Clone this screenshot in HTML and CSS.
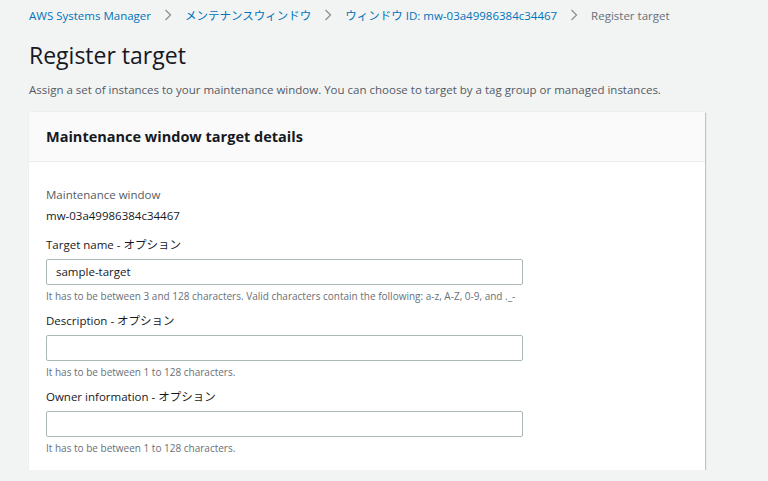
FILE: index.html
```html
<!DOCTYPE html>
<html lang="ja">
<head>
<meta charset="utf-8">
<title>Register target</title>
<link rel="stylesheet" href="styles.css">
</head>
<body>
<div class="page">
  <nav class="crumbs">
    <a class="crumb-link">AWS Systems Manager</a>
    <span class="sep"><svg width="8" height="12" viewBox="0 0 8 12"><path d="M1.5 1 L6.5 6 L1.5 11" fill="none" stroke="#879596" stroke-width="1.3"/></svg></span>
    <a class="crumb-link">メンテナンスウィンドウ</a>
    <span class="sep"><svg width="8" height="12" viewBox="0 0 8 12"><path d="M1.5 1 L6.5 6 L1.5 11" fill="none" stroke="#879596" stroke-width="1.3"/></svg></span>
    <a class="crumb-link">ウィンドウ ID: mw-03a49986384c34467</a>
    <span class="sep"><svg width="8" height="12" viewBox="0 0 8 12"><path d="M1.5 1 L6.5 6 L1.5 11" fill="none" stroke="#879596" stroke-width="1.3"/></svg></span>
    <span class="crumb-current">Register target</span>
  </nav>
  <h1 class="title">Register target</h1>
  <p class="desc">Assign a set of instances to your maintenance window. You can choose to target by a tag group or managed instances.</p>
  <section class="card">
    <header class="card-head">
      <h2 class="card-title">Maintenance window target details</h2>
    </header>
    <div class="card-body">
      <div class="kv">
        <div class="label">Maintenance window</div>
        <div class="value">mw-03a49986384c34467</div>
      </div>
      <div class="field">
        <div class="label">Target name - オプション</div>
        <div class="input">sample-target</div>
        <div class="hint">It has to be between 3 and 128 characters. Valid characters contain the following: a-z, A-Z, 0-9, and ._-</div>
      </div>
      <div class="field">
        <div class="label">Description - オプション</div>
        <div class="input"></div>
        <div class="hint">It has to be between 1 to 128 characters.</div>
      </div>
      <div class="field">
        <div class="label">Owner information - オプション</div>
        <div class="input"></div>
        <div class="hint">It has to be between 1 to 128 characters.</div>
      </div>
    </div>
  </section>
</div>
</body>
</html>
```

FILE: styles.css
```css
html, body {
  margin: 0;
  padding: 0;
  background: #f2f3f3;
  font-family: "Open Sans", "Noto Sans CJK JP", sans-serif;
  color: #16191f;
}
.page {
  padding: 6px 63px 0 29px;
}
.crumbs {
  display: flex;
  align-items: center;
  gap: 13px;
  font-size: 11.5px;
  height: 18px;
}
.crumb-link {
  color: #0073bb;
}
.crumb-current {
  color: #687078;
}
.sep {
  display: flex;
  align-items: center;
}
.title {
  margin: 16px 0 0;
  font-size: 23px;
  font-weight: 400;
  line-height: 30px;
  color: #16191f;
}
.desc {
  margin: 11px 0 0;
  font-size: 11.5px;
  line-height: 18px;
  color: #545b64;
}
.card {
  margin-top: 13px;
  background: #fff;
  box-shadow: 1px 1px 1px 0 rgba(0, 28, 36, 0.2), 0 0 1px 0 rgba(0, 28, 36, 0.12);
}
.card-head {
  background: #fafafa;
  border-bottom: 1px solid #eaeded;
  height: 49px;
  display: flex;
  align-items: center;
  padding: 0 17px;
}
.card-title {
  margin: 0;
  font-size: 14.5px;
  font-weight: 700;
  color: #16191f;
}
.card-body {
  padding: 24px 17px 15px;
}
.label {
  font-size: 11.5px;
  line-height: 18px;
  color: #16191f;
}
.kv .label {
  color: #545b64;
}
.value {
  font-size: 11.5px;
  line-height: 18px;
  margin-top: 3px;
}
.field {
  margin-top: 9px;
}
.kv + .field {
  margin-top: 11px;
}
.field .label {
  margin-bottom: 5px;
}
.input {
  box-sizing: border-box;
  width: 477px;
  height: 26px;
  border: 1px solid #aab7b8;
  border-radius: 2px;
  background: #fff;
  font-size: 11.5px;
  line-height: 24px;
  padding: 0 9px;
  color: #16191f;
}
.hint {
  font-size: 10px;
  line-height: 14px;
  margin-top: 4px;
  color: #687078;
}
```
